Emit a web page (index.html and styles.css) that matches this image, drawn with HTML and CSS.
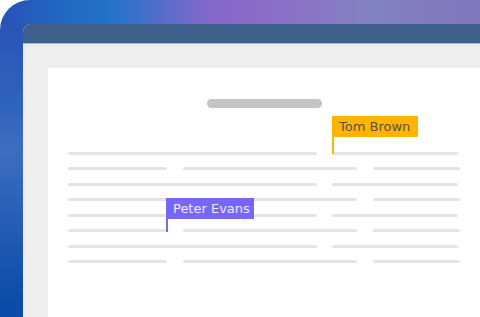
FILE: index.html
```html
<!DOCTYPE html>
<html>
<head>
    <title>Shared document</title>
    <meta name="viewport" content="width=device-width, initial-scale=1.0">
    <link rel="stylesheet" href="styles.css">
</head>
<body>
    <div class="device">
        <div class="screen">
            <div class="screen-bar"></div>
            <div class="screen-body">
                <div class="page">
                    <div class="title-pill"></div>

                    <div class="lines">
                        <div class="row row-a"><span></span><span></span></div>
                        <div class="row row-b"><span></span><span></span><span></span></div>
                        <div class="row row-a"><span></span><span></span></div>
                        <div class="row row-b"><span></span><span></span><span></span></div>
                        <div class="row row-a"><span></span><span></span></div>
                        <div class="row row-b"><span></span><span></span><span></span></div>
                        <div class="row row-a"><span></span><span></span></div>
                        <div class="row row-b"><span></span><span></span><span></span></div>
                    </div>

                    <!-- collaborator cursors -->
                    <div class="flag flag-tom">Tom Brown</div>
                    <div class="flag flag-peter">Peter Evans</div>
                </div>
            </div>
        </div>
    </div>
</body>
</html>
```

FILE: styles.css
```css
:root {
    --bar: #3d5f8a;
    --gray: #eeeeee;
    --line: #e4e4e4;
    --pill: #c4c4c4;
    --yellow: #ffb400;
    --purple: #7866f6;
}

* {
    margin: 0;
    padding: 0;
    box-sizing: border-box;
}

html, body {
    height: 100%;
}

body {
    background: #ffffff;
    overflow: hidden;
    font-family: "DejaVu Sans", "Open Sans", sans-serif;
}

.device {
    height: 100%;
    border-radius: 30px 0 0 0;
    padding: 24px 0 0 23px;
    background:
        linear-gradient(90deg, #2850b5 0, #2268c2 60px, #2272c6 110px, #4a6fca 150px, #8668cc 210px, #8a6fc6 280px, #8382c0 370px, #8075bb 480px) top left / 100% 24px no-repeat,
        linear-gradient(180deg, #2850b5 0, #2e62bb 100px, #3c6ec0 150px, #2d62b8 200px, #0c4ca8 300px);
}

.screen {
    height: 100%;
    border-radius: 8px 0 0 0;
    overflow: hidden;
    background: var(--gray);
    display: flex;
    flex-direction: column;
}

.screen-bar {
    height: 20px;
    background: var(--bar);
    border-bottom: 1px solid #a9b9cc;
}

.screen-body {
    flex: 1;
    padding: 24px 0 0 25px;
    display: flex;
}

.page {
    flex: 1;
    background: #ffffff;
    position: relative;
    padding-top: 31px;
}

.title-pill {
    width: 115px;
    height: 9px;
    margin-left: 159px;
    border-radius: 5px;
    background: var(--pill);
}

.lines {
    margin-top: 44px;
    display: flex;
    flex-direction: column;
    gap: 12.43px;
}

.row {
    display: flex;
    height: 3px;
    padding-left: 20px;
}

.row span {
    display: block;
    height: 3px;
    border-radius: 2px;
    background: var(--line);
}

.row-a span:nth-child(1) { width: 249px; }
.row-a span:nth-child(2) { width: 126px; margin-left: 15px; }

.row-b span:nth-child(1) { width: 99px; }
.row-b span:nth-child(2) { width: 174px; margin-left: 16px; }
.row-b span:nth-child(3) { width: 87px; margin-left: 16px; }

.flag {
    position: absolute;
    height: 21px;
    line-height: 21px;
    font-size: 13px;
    padding: 0 7px;
    white-space: nowrap;
}

.flag::after {
    content: "";
    position: absolute;
    left: 0;
    top: 100%;
    width: 2px;
    background: inherit;
}

.flag-tom {
    left: 284px;
    top: 48px;
    width: 86px;
    background: var(--yellow);
    color: #5a5346;
}

.flag-tom::after {
    height: 17px;
}

.flag-peter {
    left: 118px;
    top: 130px;
    width: 88px;
    background: var(--purple);
    color: #eeeaff;
}

.flag-peter::after {
    height: 13px;
}
```
